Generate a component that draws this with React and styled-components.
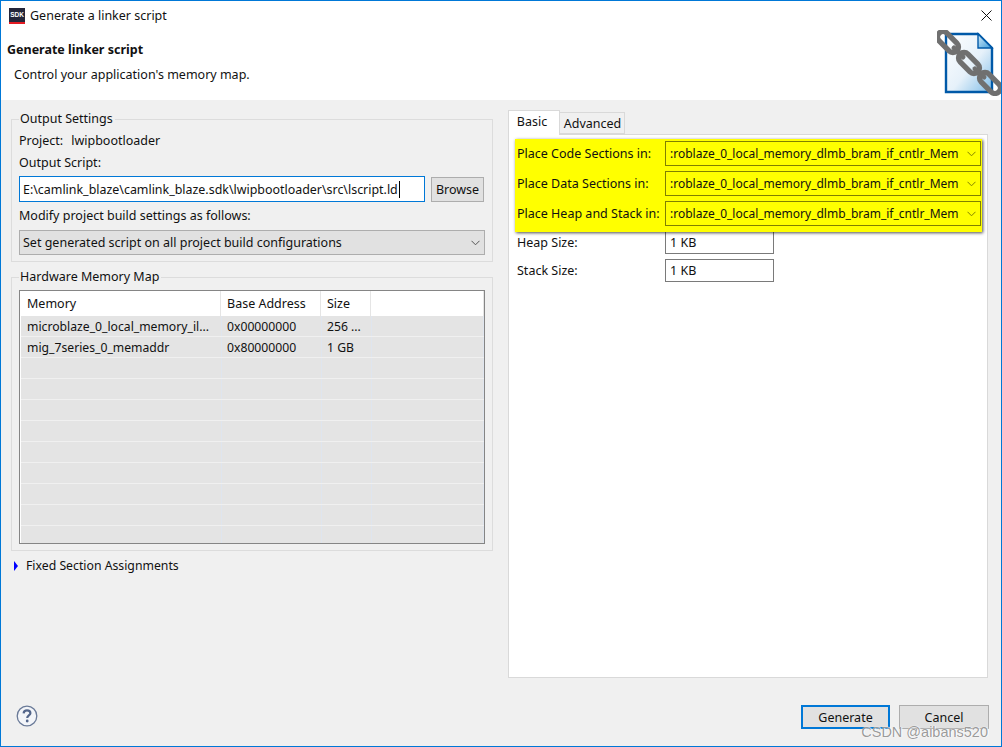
import React from 'react'
import styled, { createGlobalStyle } from 'styled-components'

const Global = createGlobalStyle`
html, body {
  margin: 0;
  padding: 0;
  background: #f0f0f0;
}
body {
  font-family: "Noto Sans", "Noto Sans CJK SC", sans-serif;
  font-size: 12px;
  color: #111;
}
* { box-sizing: border-box; }
`

const Window = styled.div`
position: relative;
width: 1002px;
height: 747px;
display: flex;
flex-direction: column;
border: 1px solid #0078d7;
background: #f0f0f0;
overflow: hidden;
`
const TitleBar = styled.div`
height: 29px;
flex: none;
display: flex;
align-items: center;
padding-left: 8px;
background: white;
font-size: 12.5px;
`
const SdkLogo = styled.span`
width: 16px;
height: 16px;
margin-right: 5px;
background: #23263a;
border-bottom: 2px solid #e31b23;
color: white;
font: bold 6.5px/13px "Liberation Sans", sans-serif;
text-align: center;
`
const CloseButton = styled.svg`
width: 11px;
height: 11px;
margin-left: auto;
margin-right: 9px;
`
const Header = styled.div`
height: 70px;
flex: none;
display: flex;
justify-content: space-between;
background: white;
`
const HeaderText = styled.div`
padding: 11px 0 0 6px;
`
const HeaderTitle = styled.div`
font-weight: 700;
font-size: 12.5px;
line-height: 17px;
`
const HeaderSub = styled.div`
margin: 8px 0 0 7px;
font-size: 12.5px;
line-height: 17px;
`
const Main = styled.div`
flex: 1;
display: flex;
gap: 15px;
padding-left: 10px;
`
const LeftColumn = styled.div`
width: 482px;
flex: none;
`
const Group = styled.fieldset`
margin: ${props => props.$top}px 0 0;
padding: 0 7px 6px;
border: 1px solid #dcdcdc;
min-width: 0;
`
const Legend = styled.legend`
margin-left: 0;
padding: 0 2px 0 1px;
font-size: 12.5px;
line-height: 16px;
`
const FormLine = styled.div`
margin-top: 6px;
line-height: 16px;
font-size: 12.5px;
display: flex;
gap: 8px;
`
const ScriptRow = styled.div`
display: flex;
align-items: flex-end;
gap: 6px;
margin-top: 5px;
`
const ScriptInput = styled.div`
width: 406px;
height: 26px;
border: 1px solid #0078d7;
background: white;
padding-left: 3px;
display: flex;
align-items: center;
font-size: 12.43px;
`
const Caret = styled.span`
width: 1px;
height: 17px;
margin-left: 1px;
background: black;
`
const Button = styled.div`
display: flex;
align-items: center;
justify-content: center;
background: #e1e1e1;
border: ${props => (props.$primary ? '2px solid #0078d7' : '1px solid #adadad')};
width: ${props => props.$w}px;
height: ${props => props.$h}px;
font-size: 12.5px;
`
const Combo = styled.div`
display: flex;
align-items: center;
justify-content: space-between;
height: 25px;
padding: 0 4px 0 ${props => props.$pad || 3}px;
margin-top: ${props => props.$mt || 0}px;
background: ${props => props.$bg || '#e1e1e1'};
border: 1px solid ${props => props.$line || '#adadad'};
font-size: ${props => props.$size || 12.5}px;
white-space: nowrap;
overflow: hidden;
`
const Chevron = styled.svg`
width: 9px;
height: 6px;
flex: none;
`
const MapTable = styled.div`
height: 254px;
margin-top: 5px;
border: 1px solid #858585;
background: white;
overflow: hidden;
`
const MapRow = styled.div`
display: grid;
grid-template-columns: 201px 100px 50px 1fr;
height: ${props => (props.$head ? 25 : 21)}px;
margin-left: ${props => (props.$head ? 0 : 1)}px;
background: ${props => (props.$head ? 'white' : '#e4e4e4')};
border-bottom: ${props => (props.$head ? 'none' : '1px solid #f0f0f0')};
`
const MapCell = styled.div`
padding-left: ${props => (props.$head ? (props.$first ? 7 : 6) : (props.$first ? 6 : 5))}px;
line-height: ${props => (props.$head ? 26 : 22)}px;
border-right: 1px solid ${props => (props.$head ? '#e5e5e5' : '#dfe5ee')};
font-size: ${props => (props.$head ? 12.5 : 12.2)}px;
white-space: nowrap;
overflow: hidden;
`
const Section = styled.div`
display: flex;
align-items: center;
gap: 8px;
margin: 7px 0 0 3px;
font-size: 12.25px;
line-height: 16px;
`
const Triangle = styled.span`
width: 0;
height: 0;
border-left: 4px solid #0000ff;
border-top: 5px solid transparent;
border-bottom: 5px solid transparent;
`
const RightColumn = styled.div`
width: 480px;
flex: none;
padding-top: 10px;
`
const Tabs = styled.div`
display: flex;
align-items: flex-end;
height: 24px;
`
const Tab = styled.div`
height: ${props => (props.$active ? 25 : 22)}px;
width: ${props => (props.$active ? 52 : 65)}px;
margin-bottom: ${props => (props.$active ? -1 : 0)}px;
padding: ${props => (props.$active ? '0 4px 0 0' : '0 0 0 1px')};
background: ${props => (props.$active ? 'white' : '#f0f0f0')};
border: 1px solid #d9d9d9;
border-bottom: ${props => (props.$active ? 'none' : '1px solid #d9d9d9')};
border-left: ${props => (props.$active ? '1px solid #d9d9d9' : 'none')};
position: relative;
font-size: 12.5px;
line-height: 21px;
text-align: center;
`
const TabPanel = styled.div`
height: 544px;
background: white;
border: 1px solid #d9d9d9;
padding-top: 4px;
`
const Highlight = styled.div`
position: relative;
width: 467px;
margin-left: 6px;
padding: 2px 1px 6px 2px;
background: #ffff00;
box-shadow: 1px 1px 3px rgba(0, 0, 0, 0.7);
display: flex;
flex-direction: column;
gap: 5px;
`
const FieldRow = styled.div`
display: grid;
grid-template-columns: 148px ${props => props.$w}px;
align-items: center;
font-size: 12.5px;
margin: ${props => props.$m || 0};
`
const SizeBox = styled.div`
height: 23px;
border: 1px solid #7a7a7a;
padding-left: 4px;
line-height: 21px;
background: white;
`
const Footer = styled.div`
height: 68px;
flex: none;
display: flex;
align-items: flex-start;
justify-content: space-between;
padding: 27px 12px 0 15px;
`
const HelpIcon = styled.svg`
width: 22px;
height: 22px;
`
const FooterButtons = styled.div`
display: flex;
gap: 9px;
`
const Watermark = styled.div`
position: absolute;
right: 13px;
bottom: 6px;
font: 14.5px/16px "Liberation Sans", sans-serif;
color: rgba(110, 110, 110, 0.7);
text-shadow: 0 0 1px #fff, 1px 0 1px #fff;
`

const ChevronIcon = ({ color }) => (
  <Chevron viewBox="0 0 9 6">
    <polyline points="0.5,0.8 4.5,4.8 8.5,0.8" fill="none" stroke={color} strokeWidth="1" />
  </Chevron>
)

const ChainIcon = () => (
  <svg width="64" height="66" viewBox="0 0 64 66" style={{ flex: 'none' }}>
    <defs>
      <linearGradient id="paper" x1="0" y1="0" x2="1" y2="1">
        <stop offset="0" stopColor="#ffffff" />
        <stop offset="0.55" stopColor="#e6f1fa" />
        <stop offset="1" stopColor="#7fbde8" />
      </linearGradient>
      <linearGradient id="fold" x1="0" y1="0" x2="1" y2="1">
        <stop offset="0" stopColor="#d5ecf9" />
        <stop offset="1" stopColor="#3d9bd9" />
      </linearGradient>
    </defs>
    <path d="M9 4H41L55 18V62H9Z" fill="url(#paper)" stroke="#0059a8" strokeWidth="2.4" />
    <path d="M41 4V18H55Z" fill="url(#fold)" stroke="#0059a8" strokeWidth="1.4" />
    <g fill="none" stroke="#707070" strokeWidth="5.4">
      <rect x="-12.5" y="-5.5" width="25" height="11" rx="5.5" transform="translate(11 12) rotate(45)" />
      <rect x="-12.5" y="-5.5" width="25" height="11" rx="5.5" transform="translate(32 33) rotate(45)" />
      <rect x="-12.5" y="-5.5" width="25" height="11" rx="5.5" transform="translate(53 53) rotate(45)" />
    </g>
    <g stroke="#707070" strokeWidth="5" strokeLinecap="round">
      <line x1="17" y1="18" x2="26" y2="27" />
      <line x1="38" y1="39" x2="47" y2="47" />
    </g>
  </svg>
)

const memoryRows = [
  ['microblaze_0_local_memory_il...', '0x00000000', '256 ...'],
  ['mig_7series_0_memaddr', '0x80000000', '1 GB'],
  ['', '', ''], ['', '', ''], ['', '', ''], ['', '', ''],
  ['', '', ''], ['', '', ''], ['', '', ''], ['', '', ''], ['', '', ''],
]

const placeLabels = ['Place Code Sections in:', 'Place Data Sections in:', 'Place Heap and Stack in:']

export default function App() {
  return (
    <Window>
      <Global />
      <TitleBar>
        <SdkLogo>SDK</SdkLogo>
        Generate a linker script
        <CloseButton viewBox="0 0 11 11">
          <path d="M0.5 0.5L10.5 10.5M10.5 0.5L0.5 10.5" stroke="#111" strokeWidth="1" />
        </CloseButton>
      </TitleBar>
      <Header>
        <HeaderText>
          <HeaderTitle>Generate linker script</HeaderTitle>
          <HeaderSub>Control your application's memory map.</HeaderSub>
        </HeaderText>
        <ChainIcon />
      </Header>
      <Main>
        <LeftColumn>
          <Group $top={11}>
            <Legend>Output Settings</Legend>
            <FormLine>
              <span>Project:</span>
              <span>lwipbootloader</span>
            </FormLine>
            <FormLine>Output Script:</FormLine>
            <ScriptRow>
              <ScriptInput>
                E:\camlink_blaze\camlink_blaze.sdk\lwipbootloader\src\lscript.ld
                <Caret />
              </ScriptInput>
              <Button $w={53} $h={25}>Browse</Button>
            </ScriptRow>
            <FormLine>Modify project build settings as follows:</FormLine>
            <Combo $mt={6}>
              Set generated script on all project build configurations
              <ChevronIcon color="#555" />
            </Combo>
          </Group>
          <Group $top={7}>
            <Legend>Hardware Memory Map</Legend>
            <MapTable>
              <MapRow $head>
                <MapCell $head $first>Memory</MapCell>
                <MapCell $head>Base Address</MapCell>
                <MapCell $head>Size</MapCell>
                <MapCell $head />
              </MapRow>
              {memoryRows.map((row, i) => (
                <MapRow key={i}>
                  <MapCell $first>{row[0]}</MapCell>
                  <MapCell>{row[1]}</MapCell>
                  <MapCell>{row[2]}</MapCell>
                  <MapCell />
                </MapRow>
              ))}
            </MapTable>
          </Group>
          <Section>
            <Triangle />
            Fixed Section Assignments
          </Section>
        </LeftColumn>
        <RightColumn>
          <Tabs>
            <Tab $active>Basic</Tab>
            <Tab>Advanced</Tab>
          </Tabs>
          <TabPanel>
            <Highlight>
              {placeLabels.map(label => (
                <FieldRow key={label} $w={316}>
                  <span>{label}</span>
                  <Combo $bg="#ffff00" $line="#808000" $size={12} $pad={4}>
                    :roblaze_0_local_memory_dlmb_bram_if_cntlr_Mem
                    <ChevronIcon color="#808000" />
                  </Combo>
                </FieldRow>
              ))}
            </Highlight>
            <FieldRow $w={109} $m="-1px 0 0 8px">
              <span>Heap Size:</span>
              <SizeBox>1 KB</SizeBox>
            </FieldRow>
            <FieldRow $w={109} $m="5px 0 0 8px">
              <span>Stack Size:</span>
              <SizeBox>1 KB</SizeBox>
            </FieldRow>
          </TabPanel>
        </RightColumn>
      </Main>
      <Footer>
        <HelpIcon viewBox="0 0 22 22">
          <circle cx="11" cy="11" r="9.8" fill="#f3f5f9" stroke="#6a7a98" strokeWidth="1.3" />
          <path d="M7.6 8.4C7.8 6.4 9.2 5.4 11 5.4C13 5.4 14.4 6.5 14.4 8.2C14.4 10.4 11.2 10.6 11.2 13" fill="none" stroke="#54678c" strokeWidth="2.2" />
          <circle cx="11.2" cy="16" r="1.4" fill="#54678c" />
        </HelpIcon>
        <FooterButtons>
          <Button $primary $w={89} $h={24}>Generate</Button>
          <Button $w={90} $h={24}>Cancel</Button>
        </FooterButtons>
      </Footer>
      <Watermark>CSDN @aibans520</Watermark>
    </Window>
  )
}
